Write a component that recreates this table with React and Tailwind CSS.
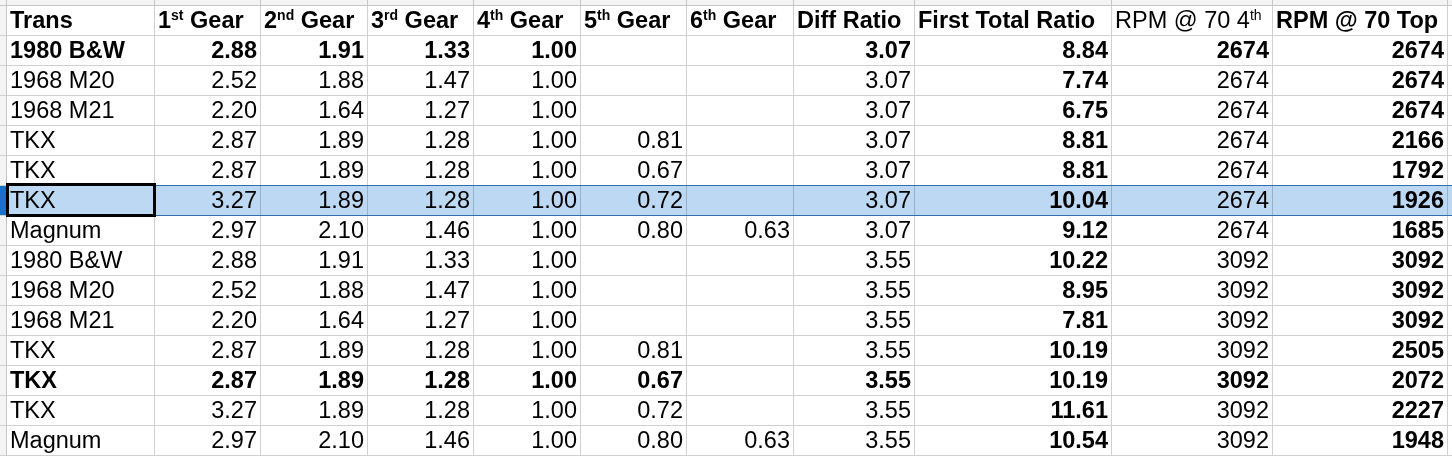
const widths = [148, 106, 107, 106, 107, 106, 107, 121, 197, 161, 175]

const headers = [
  { label: 'Trans', bold: true },
  { label: '1', sup: 'st', rest: ' Gear', bold: true },
  { label: '2', sup: 'nd', rest: ' Gear', bold: true },
  { label: '3', sup: 'rd', rest: ' Gear', bold: true },
  { label: '4', sup: 'th', rest: ' Gear', bold: true },
  { label: '5', sup: 'th', rest: ' Gear', bold: true },
  { label: '6', sup: 'th', rest: ' Gear', bold: true },
  { label: 'Diff Ratio', bold: true },
  { label: 'First Total Ratio', bold: true },
  { label: 'RPM @ 70 4', sup: 'th', bold: false },
  { label: 'RPM @ 70 Top', bold: true },
]

const rows = [
  { bold: true, cells: ['1980 B&W', '2.88', '1.91', '1.33', '1.00', '', '', '3.07', '8.84', '2674', '2674'] },
  { cells: ['1968 M20', '2.52', '1.88', '1.47', '1.00', '', '', '3.07', '7.74', '2674', '2674'] },
  { cells: ['1968 M21', '2.20', '1.64', '1.27', '1.00', '', '', '3.07', '6.75', '2674', '2674'] },
  { cells: ['TKX', '2.87', '1.89', '1.28', '1.00', '0.81', '', '3.07', '8.81', '2674', '2166'] },
  { cells: ['TKX', '2.87', '1.89', '1.28', '1.00', '0.67', '', '3.07', '8.81', '2674', '1792'] },
  { selected: true, cells: ['TKX', '3.27', '1.89', '1.28', '1.00', '0.72', '', '3.07', '10.04', '2674', '1926'] },
  { cells: ['Magnum', '2.97', '2.10', '1.46', '1.00', '0.80', '0.63', '3.07', '9.12', '2674', '1685'] },
  { cells: ['1980 B&W', '2.88', '1.91', '1.33', '1.00', '', '', '3.55', '10.22', '3092', '3092'] },
  { cells: ['1968 M20', '2.52', '1.88', '1.47', '1.00', '', '', '3.55', '8.95', '3092', '3092'] },
  { cells: ['1968 M21', '2.20', '1.64', '1.27', '1.00', '', '', '3.55', '7.81', '3092', '3092'] },
  { cells: ['TKX', '2.87', '1.89', '1.28', '1.00', '0.81', '', '3.55', '10.19', '3092', '2505'] },
  { bold: true, cells: ['TKX', '2.87', '1.89', '1.28', '1.00', '0.67', '', '3.55', '10.19', '3092', '2072'] },
  { cells: ['TKX', '3.27', '1.89', '1.28', '1.00', '0.72', '', '3.55', '11.61', '3092', '2227'] },
  { cells: ['Magnum', '2.97', '2.10', '1.46', '1.00', '0.80', '0.63', '3.55', '10.54', '3092', '1948'] },
]

// columns that are always bold (First Total Ratio, RPM @ 70 Top)
const boldCols = [8, 10]

function HeaderCell({ h, width }) {
  return (
    <div
      className={`h-[29px] shrink-0 border-r border-[#d0d0d0] pl-[3px] leading-[29px] whitespace-nowrap overflow-hidden ${h.bold ? 'font-bold' : 'font-normal'}`}
      style={{ width }}
    >
      {h.label}
      {h.sup && <span className="relative -top-[8px] text-[14px]">{h.sup}</span>}
      {h.rest}
    </div>
  )
}

export default function App() {
  return (
    <div className="relative w-[1452px] h-[457px] overflow-hidden bg-white text-black text-[23.5px] font-['Liberation_Sans',Arial,sans-serif]">
      {/* column header strip */}
      <div className="flex h-[6px] border-b border-[#c6c6c6] bg-[#f4f4f4]">
        <div className="w-[7px] shrink-0 border-r border-[#c6c6c6]" />
        {widths.map((w, i) => (
          <div key={i} className="shrink-0 border-r border-[#c6c6c6]" style={{ width: w }} />
        ))}
      </div>

      {/* header row */}
      <div className="flex border-b border-[#d0d0d0]">
        <div className="w-[7px] shrink-0 border-r border-[#c6c6c6] bg-[#f4f4f4]" />
        {headers.map((h, i) => (
          <HeaderCell key={i} h={h} width={widths[i]} />
        ))}
      </div>

      {rows.map((row, r) => (
        <div key={r} className="flex border-b border-[#d0d0d0]">
          <div className={`w-[7px] shrink-0 border-r border-[#c6c6c6] ${row.selected ? 'bg-[#1c6fce]' : 'bg-[#f4f4f4]'}`} />
          {row.cells.map((c, i) => (
            <div
              key={i}
              className={`h-[29px] shrink-0 border-r border-[#d0d0d0] leading-[29px] whitespace-nowrap ${
                i === 0 ? 'pl-[3px] text-left' : 'pr-[3px] text-right'
              } ${row.bold || boldCols.includes(i) ? 'font-bold' : 'font-normal'}`}
              style={{ width: widths[i] }}
            >
              {c}
            </div>
          ))}
        </div>
      ))}

      {/* selected row highlight */}
      <div className="pointer-events-none absolute left-[7px] right-0 top-[185px] h-[31px] border-y border-[#3b87d4] bg-[#bcd8f2] mix-blend-multiply" />
      {/* active cell */}
      <div className="pointer-events-none absolute left-[6px] top-[183px] w-[150px] h-[34px] border-[3px] border-black" />
    </div>
  )
}
